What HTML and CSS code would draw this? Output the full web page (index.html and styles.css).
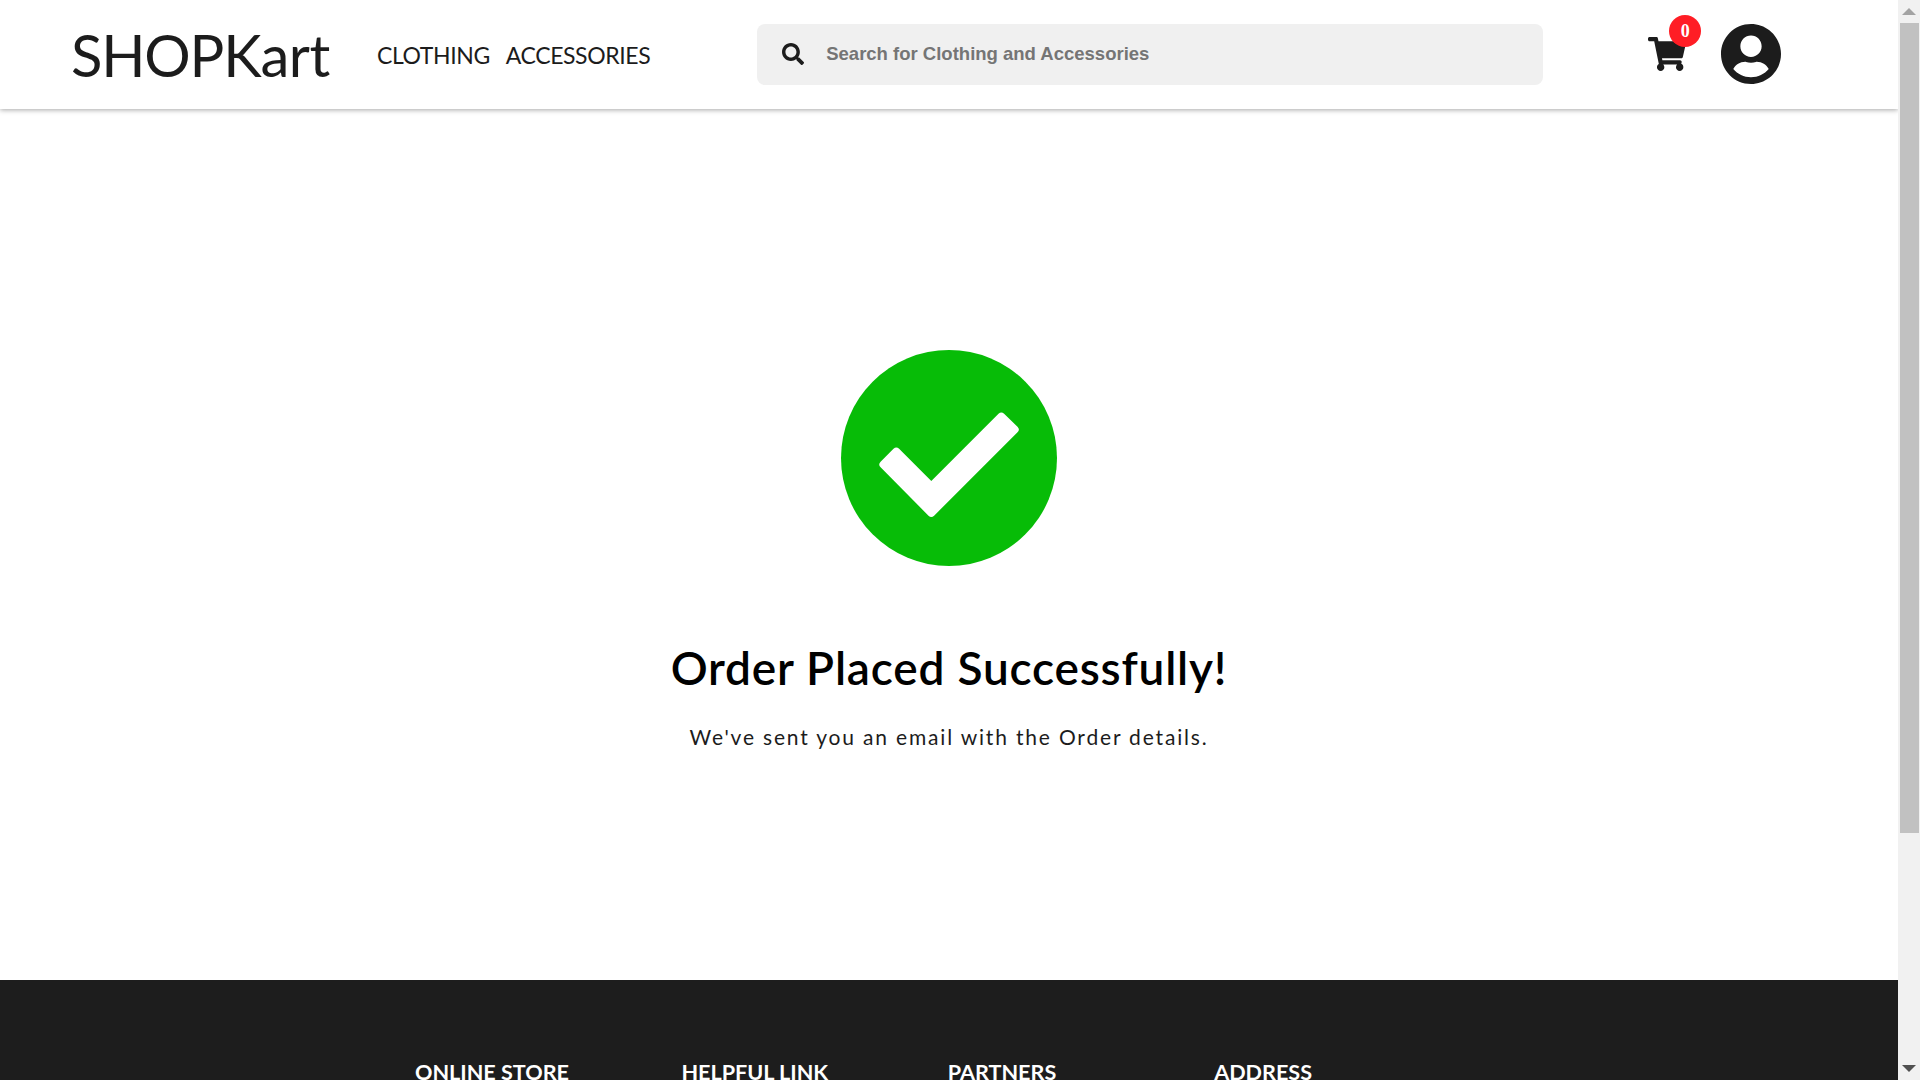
FILE: index.html
```html
<!DOCTYPE html>
<html lang="en">

<head>
    <meta charset="UTF-8">
    <meta name="viewport" content="width=device-width, initial-scale=1.0">
    <title>SHOPKart</title>
    <link rel="stylesheet" href="styles.css">
</head>

<body>
    <div class="page">
        <header class="topbar">
            <a class="logo" href="#">SHOPK<span class="logoArt">art</span></a>
            <nav class="mainNav">
                <a href="#">CLOTHING</a>
                <a href="#">ACCESSORIES</a>
            </nav>
            <div class="searchBox">
                <svg class="searchIcon" viewBox="0 0 512 512">
                    <path d="M505 442.7L405.3 343c-4.5-4.5-10.6-7-17-7H372c27.6-35.3 44-79.7 44-128C416 93.1 322.9 0 208 0S0 93.1 0 208s93.1 208 208 208c48.3 0 92.7-16.4 128-44v16.3c0 6.4 2.5 12.5 7 17l99.7 99.7c9.4 9.4 24.6 9.4 33.9 0l28.3-28.3c9.4-9.4 9.4-24.6.1-34zM208 336c-70.7 0-128-57.2-128-128 0-70.7 57.2-128 128-128 70.7 0 128 57.2 128 128 0 70.7-57.2 128-128 128z" />
                </svg>
                <input class="searchInput" type="text" placeholder="Search for Clothing and Accessories">
            </div>
            <a class="cart" href="#">
                <svg class="cartIcon" viewBox="0 0 576 512">
                    <path d="M528.12 301.319l47.273-208C578.806 78.301 567.391 64 551.99 64H159.208l-9.166-44.81C147.758 8.021 137.93 0 126.529 0H24C10.745 0 0 10.745 0 24v16c0 13.255 10.745 24 24 24h69.883l70.248 343.435C147.325 417.1 136 435.222 136 456c0 30.928 25.072 56 56 56s56-25.072 56-56c0-15.674-6.447-29.835-16.824-40h209.647C430.447 426.165 424 440.326 424 456c0 30.928 25.072 56 56 56s56-25.072 56-56c0-22.172-12.888-41.332-31.579-50.405l5.517-24.276c3.413-15.018-8.002-29.319-23.403-29.319H218.117l-6.545-32h293.145c11.206 0 20.92-7.754 23.403-18.681z" />
                </svg>
                <span class="cartBadge">0</span>
            </a>
            <a class="account" href="#">
                <svg class="accountIcon" viewBox="0 0 496 512">
                    <path d="M248 8C111 8 0 119 0 256s111 248 248 248 248-111 248-248S385 8 248 8zm0 96c48.6 0 88 39.4 88 88s-39.4 88-88 88-88-39.4-88-88 39.4-88 88-88zm0 344c-58.7 0-111.3-26.6-146.5-68.2 18.8-35.4 55.6-59.8 98.5-59.8 2.4 0 4.8.4 7.1 1.1 13 4.2 26.6 6.9 40.9 6.9 14.3 0 28-2.7 40.9-6.9 2.3-.7 4.7-1.1 7.1-1.1 42.9 0 79.7 24.4 98.5 59.8C359.3 421.4 306.7 448 248 448z" />
                </svg>
            </a>
        </header>

        <main class="success">
            <svg class="successIcon" viewBox="0 0 216 216">
                <circle cx="108" cy="108" r="108" fill="#07bc07" />
                <path fill="#fff" transform="translate(-.7 -1)" d="M40.3 112.7L53.2 99.8Q56 97 58.8 99.8L91 132L158.2 64.8Q161 62 163.8 64.8L177.2 77.7Q180 80.5 177.2 83.3L93.8 166.7Q91 169.5 88.2 166.7L40.3 118.3Q37.5 115.5 40.3 112.7Z" />
            </svg>
            <h1 class="successTitle">Order Placed Successfully!</h1>
            <p class="successText">We've sent you an email with the Order details.</p>
        </main>

        <footer class="footer">
            <h3>ONLINE STORE</h3>
            <h3>HELPFUL LINK</h3>
            <h3>PARTNERS</h3>
            <h3>ADDRESS</h3>
        </footer>
    </div>

    <div class="scrollbar">
        <div class="scrollBtn"><span class="arrowUp"></span></div>
        <div class="scrollTrack">
            <div class="scrollThumb"></div>
        </div>
        <div class="scrollBtn"><span class="arrowDown"></span></div>
    </div>
</body>

</html>
```

FILE: styles.css
```css
html,
body {
    height: 100%;
    margin: 0;
    overflow: hidden;
}

body {
    display: flex;
    background: #fff;
    font-family: Lato, "Liberation Sans", sans-serif;
    color: #1c1c1c;
}

a {
    color: inherit;
    text-decoration: none;
}

.page {
    flex: 1;
    min-width: 0;
    height: 1080px;
    display: flex;
    flex-direction: column;
    overflow: hidden;
}

/* header */
.topbar {
    height: 109px;
    flex: none;
    display: flex;
    align-items: center;
    padding-left: 71px;
    box-sizing: border-box;
    background: #fff;
    box-shadow: 0 1px 5px rgba(0, 0, 0, .35);
    position: relative;
}

.logo {
    font-size: 58px;
    line-height: 1;
    letter-spacing: -1.2px;
}

.logoArt {
    letter-spacing: -.4px;
}

.mainNav {
    display: flex;
    gap: 16px;
    margin-left: 47px;
    font-size: 23px;
    letter-spacing: -.4px;
}

.searchBox {
    display: flex;
    align-items: center;
    width: 786px;
    height: 61px;
    margin-left: 107px;
    padding-left: 25px;
    box-sizing: border-box;
    background: #f0f0f0;
    border-radius: 8px;
}

.searchIcon {
    width: 22px;
    height: 22px;
    fill: #1c1c1c;
    margin-top: -2px;
}

.searchInput {
    flex: 1;
    margin-left: 20px;
    border: 0;
    outline: 0;
    background: transparent;
    font-family: "Liberation Sans", Arial, sans-serif;
    font-size: 18.5px;
    font-weight: 700;
    margin-top: -2px;
}

.searchInput::placeholder {
    color: #757575;
}

.cart {
    position: relative;
    display: block;
    width: 38px;
    height: 34px;
    margin-left: 105px;
    margin-top: -1px;
}

.cartIcon {
    display: block;
    width: 38px;
    height: 34px;
    fill: #1c1c1c;
}

.cartBadge {
    position: absolute;
    top: -22px;
    left: 21px;
    width: 32px;
    height: 32px;
    border-radius: 50%;
    background: #ff1d25;
    color: #fff;
    font-family: "Liberation Serif", serif;
    font-size: 18px;
    font-weight: 700;
    line-height: 32px;
    text-align: center;
}

.account {
    display: block;
    margin-left: 35px;
    margin-top: -1px;
}

.accountIcon {
    display: block;
    width: 60px;
    height: 62px;
    fill: #1c1c1c;
}

/* order placed message */
.success {
    height: 871px;
    flex: none;
    display: flex;
    flex-direction: column;
    align-items: center;
    padding-top: 241px;
    box-sizing: border-box;
}

.successIcon {
    width: 216px;
    height: 216px;
    display: block;
}

.successTitle {
    margin: 74px 0 0;
    font-size: 46px;
    font-weight: 600;
    line-height: 56px;
    letter-spacing: .8px;
    color: #000;
}

.successText {
    margin: 28px 0 0;
    font-size: 21px;
    line-height: 26px;
    letter-spacing: 1.82px;
    color: #1c1c1c;
}

/* footer */
.footer {
    flex: 1;
    display: grid;
    grid-template-columns: repeat(4, 266.4px);
    padding: 80px 0 0 415px;
    background: #1d1d1d;
    color: #fff;
}

.footer h3 {
    margin: 0;
    font-size: 21.6px;
    font-weight: 700;
    line-height: 24px;
}

/* window scrollbar */
.scrollbar {
    width: 22px;
    flex: none;
    height: 1080px;
    display: flex;
    flex-direction: column;
    background: #f1f1f1;
}

.scrollBtn {
    height: 23px;
    flex: none;
    display: flex;
    align-items: center;
    justify-content: center;
}

.scrollTrack {
    flex: 1;
    padding-left: 2px;
    padding-right: 1px;
}

.scrollThumb {
    height: 810px;
    background: #c1c1c1;
}

.arrowUp,
.arrowDown {
    width: 0;
    height: 0;
    border-left: 7px solid transparent;
    border-right: 7px solid transparent;
}

.arrowUp {
    border-bottom: 7px solid #a3a3a3;
}

.arrowDown {
    border-top: 7px solid #505050;
}
```
